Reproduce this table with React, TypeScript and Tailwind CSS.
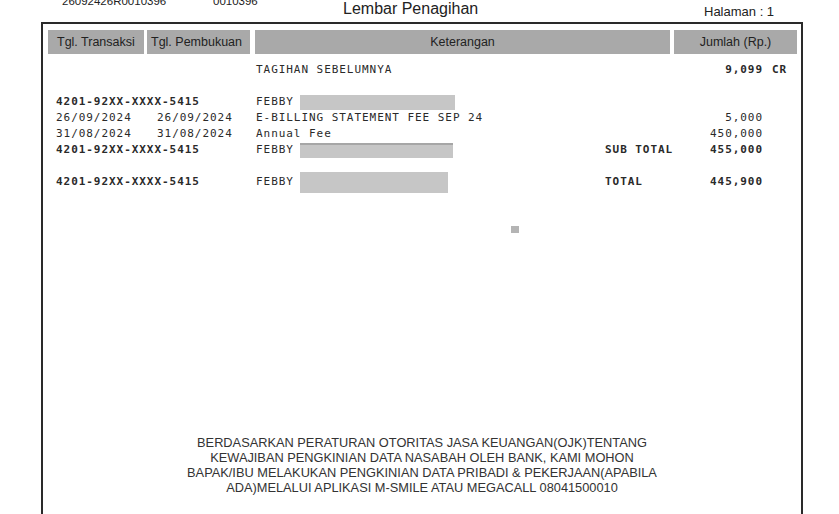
type Line = {
  c1?: string;
  c2?: string;
  desc?: string;
  redact?: { w: number; h: number; edge?: boolean };
  label?: string;
  amount?: string;
  suffix?: string;
  bold?: boolean;
  blank?: boolean;
};

const lines: Line[] = [
  { desc: "TAGIHAN SEBELUMNYA", amount: "9,099", suffix: "CR" },
  { blank: true },
  { c1: "4201-92XX-XXXX-5415", desc: "FEBBY", redact: { w: 155, h: 15 }, bold: true },
  { c1: "26/09/2024", c2: "26/09/2024", desc: "E-BILLING STATEMENT FEE SEP 24", amount: "5,000" },
  { c1: "31/08/2024", c2: "31/08/2024", desc: "Annual Fee", amount: "450,000" },
  {
    c1: "4201-92XX-XXXX-5415",
    desc: "FEBBY",
    redact: { w: 153, h: 15, edge: true },
    label: "SUB TOTAL",
    amount: "455,000",
    bold: true,
  },
  { blank: true },
  {
    c1: "4201-92XX-XXXX-5415",
    desc: "FEBBY",
    redact: { w: 148, h: 21 },
    label: "TOTAL",
    amount: "445,900",
    bold: true,
  },
];

function Row({ line }: { line: Line }) {
  if (line.blank) return <div className="h-4" />;
  const weight = line.bold ? "font-bold" : "font-normal";
  return (
    <div className="flex h-4 items-center whitespace-pre text-[11px] tracking-[0.95px] text-[#2a2a2a]">
      <span className={`w-[101px] ${weight}`}>{line.c1}</span>
      <span className="w-[99px]">{line.c2}</span>
      <span className="flex w-[349px] items-center">
        {line.desc}
        {line.redact && (
          <span
            className={`ml-[6px] inline-block bg-[#c6c6c6] ${line.redact.edge ? "border-t-2 border-[#a6a6a6]" : ""}`}
            style={{ width: line.redact.w, height: line.redact.h }}
          />
        )}
      </span>
      <span className="w-[80px] font-bold">{line.label}</span>
      <span className={`w-[78px] text-right ${line.suffix || line.bold ? "font-bold" : ""}`}>
        {line.amount}
      </span>
      {line.suffix && <span className="ml-[9px] font-bold">{line.suffix}</span>}
    </div>
  );
}

export default function App() {
  return (
    <div className="relative h-[514px] w-[839px] overflow-hidden bg-white font-['Liberation_Sans',Arial,sans-serif]">
      {/* page heading */}
      <div className="flex h-[22px] items-start text-[#222]">
        <span className="ml-[62px] mt-[-5px] w-[151px] text-[11.5px] leading-[13px]">26092426R0010396</span>
        <span className="mt-[-5px] w-[130px] text-[11.5px] leading-[13px]">0010396</span>
        <span className="w-[134px] whitespace-nowrap text-center text-[16px] leading-[17px]">Lembar Penagihan</span>
        <span className="ml-[227px] mt-[4px] text-[13px] leading-[15px]">Halaman : 1</span>
      </div>

      <div className="ml-[41px] flex h-[492px] w-[762px] flex-col border-x-2 border-t-2 border-[#2a2a2a]">
        {/* column headers */}
        <div className="flex pl-[5px] pt-[6px] text-[12.5px] text-[#222]">
          <div className="flex h-6 w-[96px] items-center bg-[#a9a9a9] pl-[9px]">Tgl. Transaksi</div>
          <div className="ml-[3px] flex h-6 w-[103px] items-center bg-[#a9a9a9] pl-[4px]">Tgl. Pembukuan</div>
          <div className="ml-[5px] flex h-6 w-[415px] items-center justify-center bg-[#a9a9a9]">Keterangan</div>
          <div className="ml-[4px] flex h-6 w-[123px] items-center justify-center bg-[#a9a9a9]">Jumlah (Rp.)</div>
        </div>

        {/* statement lines */}
        <div className="mt-[8px] pl-[13px] font-['DejaVu_Sans_Mono',monospace]">
          {lines.map((line, i) => (
            <Row key={i} line={line} />
          ))}
        </div>

        <div className="ml-[468px] mt-[36px] h-[7px] w-[8px] bg-[#b4b4b4]" />

        {/* notice */}
        <div className="mt-[202px] text-center text-[12.8px] leading-[15px] text-[#333]">
          <p>BERDASARKAN PERATURAN OTORITAS JASA KEUANGAN(OJK)TENTANG</p>
          <p>KEWAJIBAN PENGKINIAN DATA NASABAH OLEH BANK, KAMI MOHON</p>
          <p>BAPAK/IBU MELAKUKAN PENGKINIAN DATA PRIBADI &amp; PEKERJAAN(APABILA</p>
          <p>ADA)MELALUI APLIKASI M-SMILE ATAU MEGACALL 08041500010</p>
        </div>
      </div>
    </div>
  );
}
